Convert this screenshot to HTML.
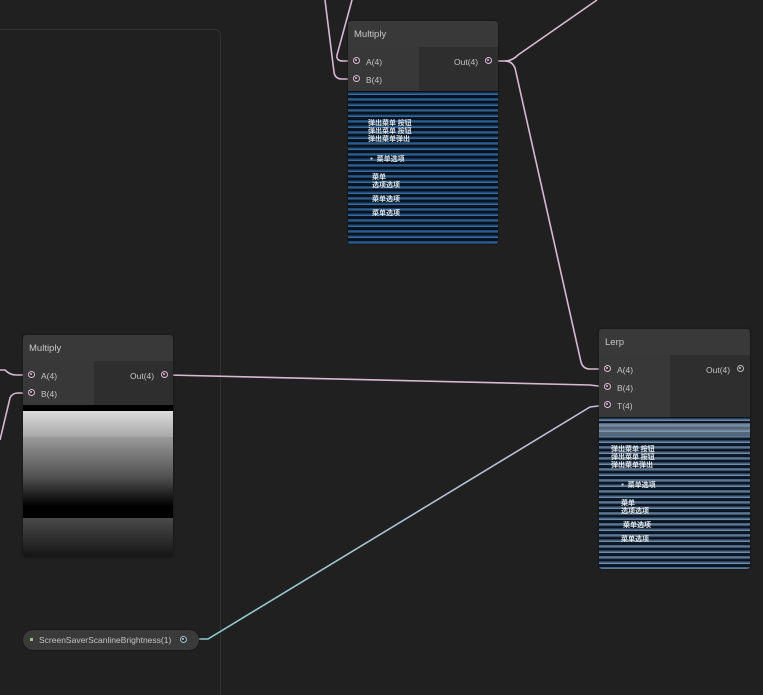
<!DOCTYPE html>
<html style="overflow:hidden;width:763px;height:695px"><head><meta charset="utf-8"><style>
*{margin:0;padding:0;box-sizing:border-box}
body{width:763px;height:695px;background:#202020;position:relative;overflow:hidden;font-family:"Liberation Sans",sans-serif;font-size:9px;color:#c4c4c4}
.group{position:absolute;left:-10px;top:29px;width:231px;height:690px;border:1px solid #333;border-radius:6px}
.node{position:absolute;background:#2b2b2b;border-radius:3px;overflow:hidden;box-shadow:0 0 2px #111}
.title{height:26px;background:#393939;padding:8px 6px;font-size:9.5px;color:#c8c8c8}
.ports{position:relative;background:#2e2e2e}
.lp{position:absolute;left:0;top:0;bottom:0;width:71px;background:#383838}
.p{position:absolute;font-size:8.5px;color:#c4c4c4}
.dot{position:absolute;width:7px;height:7px;border-radius:50%;border:1.5px solid #e0b8d8;background:#2e2e2e}
.dot::after{content:"";position:absolute;left:1px;top:1px;width:2px;height:2px;border-radius:50%;background:#e0b8d8}
.scan{background:repeating-linear-gradient(#08121e 0 1.5px,#1f4c78 1.5px 3px,#3a6d9e 3px 4px,#081420 4px 5.5px)}
.scan2{background:repeating-linear-gradient(#0a1420 0 1.5px,#4a6684 1.5px 3px,#6d8aa6 3px 4px,#0e1a28 4px 5.5px)}
.txt{position:absolute;color:#fff;font-size:7px;line-height:8px;font-weight:bold;opacity:.85;font-family:"Noto Sans CJK SC",sans-serif}
</style></head><body>
<div class="group"></div>
<svg width="763" height="695" style="position:absolute;left:0;top:0">
<defs><linearGradient id="g" x1="0" y1="0" x2="1" y2="0"><stop offset="0" stop-color="#8cc8d0"/><stop offset="1" stop-color="#c8bcd8"/></linearGradient></defs>
<g fill="none" stroke="#d8b8d0" stroke-width="1.6">
<path d="M325 0 L334 72 Q335 79 342 79 L353 79"/>
<path d="M352 0 L337 55 Q336 61 343 61 L353 61"/>
<path d="M492 61 L505 61 Q512 61 518 55 L597 0"/>
<path d="M505 61 Q512 61 515 68 L581 362 Q583 369 590 369 L606 369"/>
<path d="M168 375 L590 385 L606 387"/>
<path d="M0 370 L5 370 Q10 375 16 375 L30 375"/>
<path d="M0 440 L10 398 Q12 393 18 393 L30 393"/>
</g>
<path d="M199 639 L208 639 L590 407 L606 405" fill="none" stroke="url(#g)" stroke-width="1.6"/>
</svg>

<div class="node" style="left:348px;top:21px;width:150px;height:223px">
<div class="title">Multiply</div>
<div class="ports" style="height:44px"><div class="lp"></div>
<div class="dot" style="left:5px;top:10px"></div><div class="p" style="left:18px;top:10px">A(4)</div>
<div class="dot" style="left:5px;top:28px"></div><div class="p" style="left:18px;top:28px">B(4)</div>
<div class="p" style="left:106px;top:10px">Out(4)</div><div class="dot" style="left:137px;top:10px"></div>
</div>
<div class="scan" style="height:153px;position:relative">
<div class="txt" style="left:20px;top:28px">弹出菜单 按钮<br>弹出菜单 按钮<br>弹出菜单弹出</div>
<div class="txt" style="left:20px;top:64px">▪ 菜单选项</div>
<div class="txt" style="left:24px;top:82px">菜单<br>选项选项</div>
<div class="txt" style="left:24px;top:104px">菜单选项</div>
<div class="txt" style="left:24px;top:118px">菜单选项</div>
</div></div>

<div class="node" style="left:23px;top:335px;width:150px;height:222px">
<div class="title">Multiply</div>
<div class="ports" style="height:44px"><div class="lp"></div>
<div class="dot" style="left:5px;top:10px"></div><div class="p" style="left:18px;top:10px">A(4)</div>
<div class="dot" style="left:5px;top:28px"></div><div class="p" style="left:18px;top:28px">B(4)</div>
<div class="p" style="left:107px;top:10px">Out(4)</div><div class="dot" style="left:138px;top:10px"></div>
</div>
<div style="height:6px;background:#000"></div>
<div style="height:26px;background:linear-gradient(#dcdcdc,#a8a8a8)"></div>
<div style="height:81px;background:linear-gradient(#9a9a9a,#505050 50%,#000 85%,#000)"></div>
<div style="height:39px;background:linear-gradient(#4a4a4a,#2a2a2a 60%,#151515)"></div>
</div>

<div class="node" style="left:599px;top:329px;width:151px;height:240px">
<div class="title">Lerp</div>
<div class="ports" style="height:62px"><div class="lp" style="width:71px"></div>
<div class="dot" style="left:5px;top:10px"></div><div class="p" style="left:18px;top:10px">A(4)</div>
<div class="dot" style="left:5px;top:28px"></div><div class="p" style="left:18px;top:28px">B(4)</div>
<div class="dot" style="left:5px;top:46px"></div><div class="p" style="left:18px;top:46px">T(4)</div>
<div class="p" style="left:107px;top:10px">Out(4)</div><div class="dot" style="left:138px;top:10px;border-color:#bbb"></div>
</div>
<div class="scan2" style="height:152px;position:relative">
<div style="position:absolute;left:0;right:0;top:6px;height:12px;background:#8a9cb0;opacity:.6"></div>
<div class="txt" style="left:12px;top:28px">弹出菜单 按钮<br>弹出菜单 按钮<br>弹出菜单弹出</div>
<div class="txt" style="left:20px;top:64px">▪ 菜单选项</div>
<div class="txt" style="left:22px;top:82px">菜单<br>选项选项</div>
<div class="txt" style="left:24px;top:104px">菜单选项</div>
<div class="txt" style="left:22px;top:118px">菜单选项</div>
</div></div>

<div style="position:absolute;left:23px;top:630px;width:176px;height:20px;border-radius:10px;background:#3a3a3a;box-shadow:0 0 2px #111">
<div style="position:absolute;left:7px;top:8px;width:3px;height:3px;background:#8cd070"></div>
<div class="p" style="left:16px;top:5px;font-size:8.5px">ScreenSaverScanlineBrightness(1)</div>
<div class="dot" style="left:157px;top:6px;border-color:#8cc8d0"></div>
</div>
</body></html>
